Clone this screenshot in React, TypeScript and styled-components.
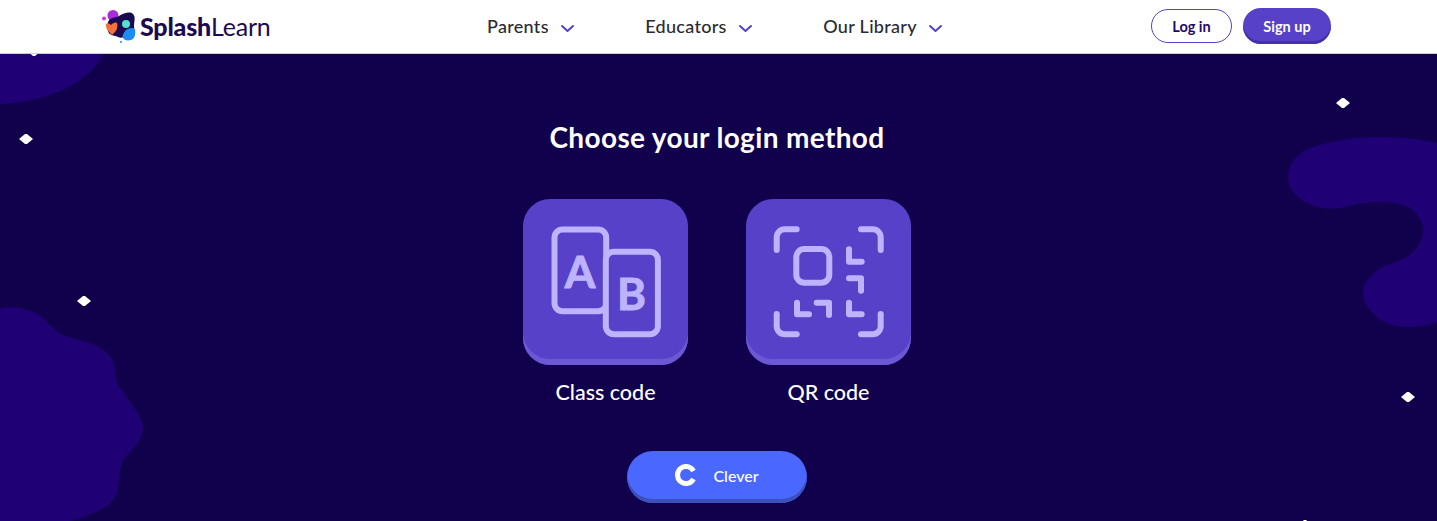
import styled, { createGlobalStyle } from "styled-components"

const GlobalStyle = createGlobalStyle`
  html, body {
    margin: 0;
    padding: 0;
    height: 521px;
    overflow: hidden;
    background: #11004c;
    font-family: "Lato", "Open Sans", sans-serif;
  }
  * { box-sizing: border-box; }
`

const Page = styled.div`
  display: flex;
  flex-direction: column;
  height: 521px;
`

const Header = styled.header`
  display: flex;
  align-items: center;
  height: 54px;
  padding: 0 106px 1px 101px;
  background: #fff;
  border-bottom: 1px solid #cfcbdc;
  flex-shrink: 0;
`

const LogoLink = styled.a`
  display: flex;
  align-items: center;
  gap: 3px;
  width: 386px;
  color: #1b0a50;
  font-size: 25px;
  letter-spacing: -0.2px;
`

const LogoStrong = styled.b`
  font-weight: 900;
`

const LogoLight = styled.span`
  font-weight: 400;
`

const Nav = styled.nav`
  display: flex;
  flex: 1;
  gap: 70.5px;
`

const NavItem = styled.a`
  display: flex;
  align-items: center;
  gap: 11px;
  color: #2a2a33;
  font-size: 18px;
  font-weight: 500;
  letter-spacing: 0.3px;
`

const Chevron = styled.svg`
  width: 15px;
  height: 9px;
  margin-top: 4px;
  fill: none;
  stroke: #5641c8;
  stroke-width: 2;
  stroke-linecap: round;
  stroke-linejoin: round;
`

const HeaderActions = styled.div`
  display: flex;
  align-items: center;
  gap: 11px;
`

const OutlineButton = styled.button`
  width: 81px;
  height: 34px;
  border: 1px solid #5641c8;
  border-radius: 17px;
  background: #fff;
  color: #1f0a6b;
  font: 700 14.5px "Lato", sans-serif;
`

const SolidButton = styled.button`
  width: 88px;
  height: 36px;
  border: 0;
  border-radius: 18px;
  background: #5641c8;
  box-shadow: inset 0 -3px 0 #4630ad;
  color: #fff;
  font: 700 14.5px "Lato", sans-serif;
`

const Main = styled.main`
  position: relative;
  flex: 1;
  display: flex;
  flex-direction: column;
  align-items: center;
  padding: 65px 3px 0 0;
  overflow: hidden;
  background: #11004c;
  color: #fff;
`

const Backdrop = styled.svg`
  position: absolute;
  top: 0;
  left: 0;
  width: 1437px;
  height: 467px;
`

const Title = styled.h1`
  position: relative;
  margin: 0 0 44px;
  font-size: 28px;
  line-height: 36px;
  font-weight: 700;
  letter-spacing: 0.35px;
`

const Methods = styled.div`
  position: relative;
  display: flex;
  gap: 58px;
`

const Method = styled.a`
  display: flex;
  flex-direction: column;
  align-items: center;
  gap: 13px;
  width: 165px;
  color: #fff;
  font-size: 21.5px;
  line-height: 28px;
  font-weight: 500;
`

const MethodCard = styled.div`
  display: flex;
  justify-content: center;
  width: 165px;
  height: 166px;
  padding-top: 23px;
  border-radius: 27px;
  background: #5641c8;
  box-shadow: inset 0 -6px 0 #6c58d4;
`

const MethodIcon = styled.svg`
  width: 119px;
  height: 119px;
  fill: none;
  stroke: #bdb3ff;
  stroke-width: 6;
  stroke-linecap: round;
  stroke-linejoin: round;
`

const IconLetter = styled.text`
  fill: #bdb3ff;
  stroke: #bdb3ff;
  stroke-width: 1;
  font: 700 44px "Lato", sans-serif;
  text-anchor: middle;
`

const CleverButton = styled.button`
  position: relative;
  display: flex;
  align-items: center;
  justify-content: center;
  gap: 16px;
  width: 180px;
  height: 52px;
  margin-top: 45px;
  padding: 0 0 4px;
  border: 0;
  border-radius: 26px;
  background: #4a68ff;
  box-shadow: inset 0 -4px 0 #3b50b8;
  color: #fff;
  font: 500 16px "Lato", sans-serif;
`

const CleverMark = styled.svg`
  width: 22px;
  height: 22px;
  fill: none;
  stroke: #fff;
  stroke-width: 5;
`

const stars = [
  [26, 85],
  [84, 247],
  [1343, 49],
  [1408, 343],
  [34, -3],
  [1305, 471],
]

function DownArrow() {
  return (
    <Chevron viewBox="0 0 15 9">
      <path d="M2 2l5.5 5L13 2" />
    </Chevron>
  )
}

function Logo() {
  return (
    <svg width="36" height="34" viewBox="0 0 36 34">
      <circle cx="3" cy="9.5" r="2" fill="#d23bd0" />
      <circle cx="12" cy="6.5" r="5.5" fill="#a92bdc" />
      <path d="M7 13c2-5 7-4 11-6 5-3 11-5 14-2 3 3 1 8 1 12 1 5-1 10-6 10-4 0-6 3-10 1-4-2-9-1-10-6-1-3-1-6 0-9z" fill="#1b0a50" />
      <path d="M25 21c3-2 8-3 9 0 1 5-1 9-4 10-4 1-7 0-8-2-1-3 1-6 3-8z" fill="#1c8cf5" />
      <path d="M5 15c2-1 4 0 5 1 2-2 4-3 6-2 1 3 0 7-2 9-1 1-2 2-3 3-3-3-7-7-6-11z" fill="#f4733c" />
      <circle cx="25" cy="15" r="4" fill="#52e0d0" />
      <circle cx="20" cy="33" r="1" fill="#1c8cf5" />
    </svg>
  )
}

export default function App() {
  return (
    <Page>
      <GlobalStyle />
      <Header>
        <LogoLink>
          <Logo />
          <span>
            <LogoStrong>Splash</LogoStrong>
            <LogoLight>Learn</LogoLight>
          </span>
        </LogoLink>
        <Nav>
          <NavItem>Parents <DownArrow /></NavItem>
          <NavItem>Educators <DownArrow /></NavItem>
          <NavItem>Our Library <DownArrow /></NavItem>
        </Nav>
        <HeaderActions>
          <OutlineButton>Log in</OutlineButton>
          <SolidButton>Sign up</SolidButton>
        </HeaderActions>
      </Header>
      <Main>
        {/* blobs and stars, page coords minus the header */}
        <Backdrop viewBox="0 0 1437 467">
          <g fill="#1f0075" transform="translate(0 -1)">
            <path d="M0 0H104C90 29 50 49 0 51Z" />
            <path d="M0 255C8 254 14 254 20 255C30 257 37 260 43 265C50 272 56 279 63 282C75 286 90 289 100 295C110 301 114 307 115 317C116 327 117 334 122 337C129 350 143 362 143 375C143 388 130 398 123 407C119 415 120 428 117 440C114 448 108 453 100 457C92 461 80 465 70 468H0Z" />
            <path d="M1437 90C1420 86 1400 84 1380 84C1355 84 1330 88 1310 95C1296 101 1288 112 1288 124C1288 137 1298 147 1314 153C1328 158 1342 155 1353 152C1362 150 1370 149 1380 149C1392 149 1403 151 1410 155C1419 162 1423 169 1423 177C1423 185 1419 193 1413 199C1405 206 1396 209 1387 212C1377 216 1372 222 1368 227C1364 232 1363 236 1363 240C1363 249 1369 257 1377 264C1386 271 1396 274 1408 274C1418 274 1428 272 1437 269Z" />
          </g>
          <g fill="#fff">
            {stars.map(([x, y]) => (
              <path key={x} d={`M${x - 7} ${y}L${x - 1} ${y - 5}H${x + 1}L${x + 7} ${y}L${x + 1} ${y + 5}H${x - 1}Z`} />
            ))}
          </g>
        </Backdrop>
        <Title>Choose your login method</Title>
        <Methods>
          <Method>
            <MethodCard>
              <MethodIcon viewBox="0 0 119 119">
                <rect x="8.5" y="7.5" width="51.7" height="81.7" rx="8" />
                <rect x="59.8" y="29.8" width="52.1" height="82.4" rx="8" fill="#5641c8" />
                <IconLetter x="34" y="66">A</IconLetter>
                <IconLetter x="85.5" y="88">B</IconLetter>
              </MethodIcon>
            </MethodCard>
            Class code
          </Method>
          <Method>
            <MethodCard>
              <MethodIcon viewBox="0 0 119 119">
                <path d="M7.7 28V15.3a8 8 0 0 1 8-8H27.7" />
                <path d="M92 7.3H103.7a8 8 0 0 1 8 8V28" />
                <path d="M7.7 92V104.3a8 8 0 0 0 8 8H27.7" />
                <path d="M92 112.3H103.7a8 8 0 0 0 8-8V92" />
                <rect x="27.3" y="27" width="33" height="33.7" rx="8" />
                <path d="M80 27.3V39.7H92.7" />
                <path d="M80 56.3H92V68.7" />
                <path d="M28 80.7V92.3H40" />
                <path d="M47.7 80.7H60V93" />
                <path d="M80 80.7V92.3H92.7" />
              </MethodIcon>
            </MethodCard>
            QR code
          </Method>
        </Methods>
        <CleverButton>
          <CleverMark viewBox="0 0 22 22">
            <path d="M18.5 7A8.5 8.5 0 1 0 18.5 15" />
          </CleverMark>
          Clever
        </CleverButton>
      </Main>
    </Page>
  )
}
